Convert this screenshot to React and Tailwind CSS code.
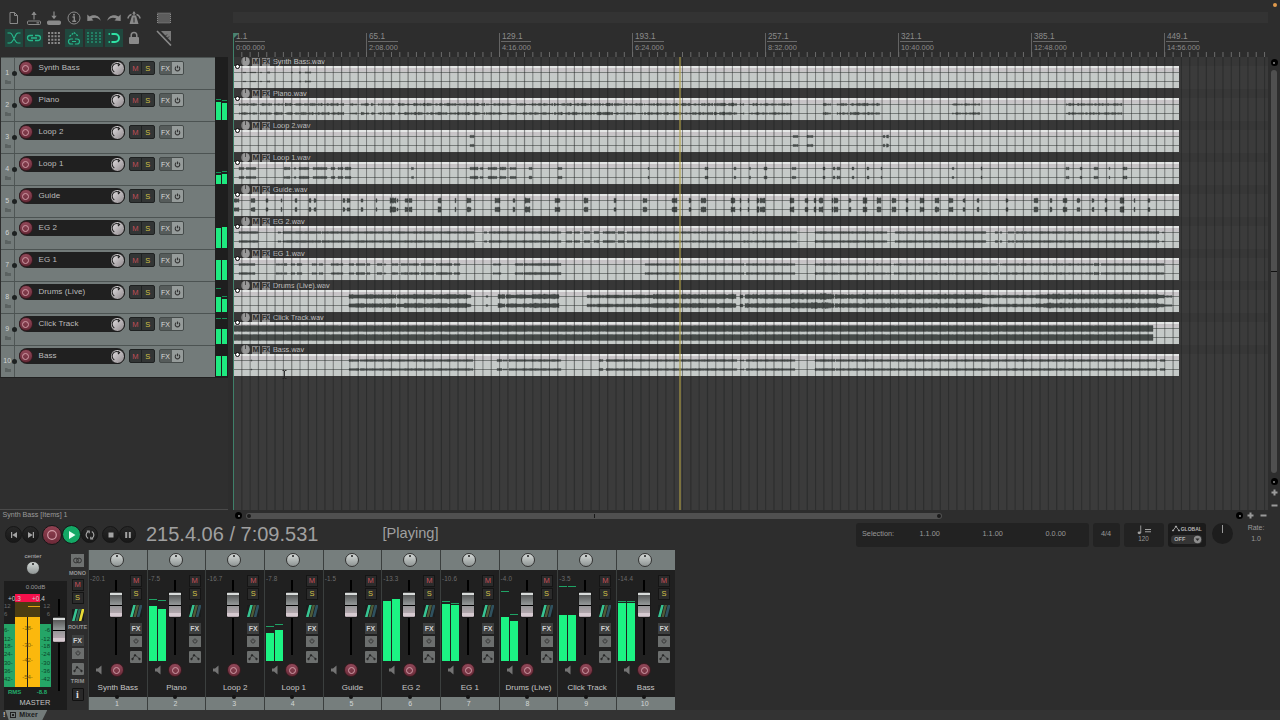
const tracks = [
  { name: "Synth Bass", db: "-20.1", tcp: [], mix: [], peaks: [] },
  { name: "Piano", db: "-7.5", tcp: [18, 17], tcpPeaks: [20, 19], mix: [55, 52], peaks: [61, 60] },
  { name: "Loop 2", db: "-16.7", tcp: [], mix: [], peaks: [] },
  { name: "Loop 1", db: "-7.8", tcp: [9, 10], tcpPeaks: [11, 12], mix: [28, 31], peaks: [34, 36] },
  { name: "Guide", db: "-1.5", tcp: [], mix: [], peaks: [] },
  { name: "EG 2", db: "-13.3", tcp: [20, 21], mix: [60, 62], peaks: [] },
  { name: "EG 1", db: "-10.6", tcp: [20, 20], mix: [57, 56], peaks: [59, 57.5] },
  { name: "Drums (Live)", db: "-4.0", tcp: [15, 13], tcpPeaks: [23, 15], mix: [44, 40], peaks: [69, 46.5] },
  { name: "Click Track", db: "-3.5", tcp: [15, 15], tcpPeaks: [25, 25], mix: [46, 46], peaks: [74, 74] },
  { name: "Bass", db: "-14.4", tcp: [20, 20], mix: [58, 58], peaks: [59.5, 59.5] },
];

// [start, end, amplitude] for every audible part, in timeline pixels
const waves = [
  [[10, 13, 0.6], [17, 23, 0.6], [27, 29, 0.6], [34, 37, 0.8], [58, 60, 0.6], [66, 68, 0.8], [72, 78, 0.8]],
  [[6, 24, 1.4], [27, 39, 1.6], [41, 50, 1.4], [52, 60, 1.5], [61, 111, 1.4], [117, 124, 1.3], [128, 136, 1.5], [138, 142, 1.5], [145, 162, 1.3], [165, 252, 1.5], [253, 320, 1.3], [321, 380, 1.6], [381, 410, 1.3], [411, 480, 1.5], [481, 504, 1.7], [507, 511, 1.4], [516, 559, 1.4], [590, 598, 1.4], [604, 615, 1.4], [617, 647, 1.5], [719, 747, 1.2], [833, 889, 1.4]],
  [[237, 241, 1.4], [560, 565, 1.2], [574, 580, 1.2], [650, 652, 1.4], [653.5, 656, 1.8]],
  [[6, 11, 1.3], [13, 23, 1.2], [51, 57, 1.2], [61, 63, 1], [66, 76, 1.3], [80, 94, 1.2], [98, 102, 1.2], [105, 110, 1.2], [112, 118, 1.4], [178.5, 181, 1.4], [237, 245, 1.4], [247, 250, 1.2], [255, 264, 1.3], [267, 273, 1.4], [277, 283, 1.2], [296, 299, 1.4], [325, 329, 1.3], [415, 416, 1.3], [472, 475, 1.6], [501, 503, 1.5], [516.5, 518, 1.5], [531, 534, 1.6], [559, 563, 1.4], [590, 592, 1.5], [600, 602, 1.4], [604, 607, 1.7], [619, 621, 1.5], [634, 636, 1.5], [648, 649.5, 1.5], [719, 721, 1.3], [748, 749.5, 1.8], [833, 836, 1.5], [847, 849, 1.4], [861, 865, 1.5], [876, 877, 1.4], [890, 894, 1.6]],
  [[0, 6, 2], [18, 22, 2.2], [33, 35, 2.2], [48, 49.5, 2.2], [62, 64, 2.4], [76, 78, 2.4], [81, 83, 2.2], [110, 112, 2.2], [114, 117, 2.2], [128, 130, 2], [143, 144.5, 2.2], [157, 163, 3], [164, 165, 2], [172, 175, 2.4], [176, 179, 2.8], [205, 208, 2.8], [222, 223.5, 2.6], [234, 238, 2.6], [262, 267, 2.6], [280, 282, 2.6], [292, 297, 3], [322, 327, 2.6], [351, 355, 2.8], [381, 383, 2.4], [410, 414, 2.8], [439, 444, 2.6], [456, 458, 2.6], [468, 473, 2.8], [498, 502, 2.8], [507, 508, 2.6], [515, 516.5, 2.6], [524, 526, 3], [527, 532, 3], [557, 561, 3], [572, 575, 2.8], [581, 583, 2.8], [586, 590, 2.8], [599, 600.5, 2.6], [601, 605, 2.8], [616, 618, 2.4], [630, 634, 3], [644, 648, 3], [659, 663, 2.8], [673, 675, 2.4], [687, 691, 2.8], [702, 706, 2.8], [716, 720, 2.8], [730, 732, 2.4], [744, 746, 2.4], [773, 775, 2.2], [801, 805, 2.8], [817, 819, 2.6], [830, 834, 2.8], [844, 847, 2.4], [859, 861, 2.4], [872, 874, 2.4], [887, 891, 3.2], [901, 902, 2.4], [915, 917, 2.2]],
  [[6, 25, 1.1], [45, 48, 0.8], [50, 88, 1.1], [89, 241, 1], [251, 254, 0.8], [256, 328, 1], [333, 339, 1], [341, 347, 1], [351, 357, 1.1], [361, 366, 1.2], [370, 382, 1.1], [385, 391, 1.2], [394, 564, 0.9], [582, 654, 1], [662, 753, 1], [762, 765, 1], [767, 769, 1], [775, 781, 0.9], [783, 790, 1], [791, 926, 1], [929, 931, 0.6]],
  [[6, 22, 1.1], [43, 50, 0.8], [51, 54, 1], [58, 62, 1], [64, 69, 1], [79, 84, 0.9], [86, 90, 0.9], [98, 110, 0.9], [116, 121, 1], [123, 132, 1.1], [134, 137, 1], [144, 149, 1.1], [151, 153, 0.8], [159, 165, 1.1], [168, 175, 1], [176, 186, 1], [188, 201, 1.1], [203, 219, 1.1], [221, 227, 1], [260, 268, 0.8], [282, 290, 1], [291, 328, 1.2], [412, 511, 1], [513, 562, 1], [582, 658, 0.9], [661, 765, 0.9], [767, 860, 0.9], [861, 866, 1.4], [868, 931, 1]],
  [[116, 163, 2.2], [164, 171, 2], [171, 234, 2.4], [234, 238, 1.6], [253, 255, 0.9], [265, 272, 2.2], [273, 300, 2], [300, 326, 2.4], [354, 400, 1.6], [400, 420, 1.9], [420, 470, 2.5], [470, 503, 2.4], [507, 510, 2], [512, 558, 2.4], [558, 598, 3.1], [598, 601, 2.2], [602, 630, 2.3], [630, 749, 2.6], [749, 803, 1.6], [803, 814, 2], [814, 900, 2.7], [900, 925, 2.5], [925, 931, 1.8], [931, 939, 0.9]],
  [[0, 920, 3.1]],
  [[18, 19, 0.7], [116, 126, 1.1], [127, 240, 1], [264, 269, 1.2], [270, 274, 0.8], [276, 328, 1], [366, 370, 1.2], [373, 504, 1], [507, 511, 0.8], [513, 562, 1], [582, 602, 1.1], [603, 924, 1], [927, 932, 1.1]],
];

const marks = [
  ["1.1", "0:00.000"],
  ["65.1", "2:08.000"],
  ["129.1", "4:16.000"],
  ["193.1", "6:24.000"],
  ["257.1", "8:32.000"],
  ["321.1", "10:40.000"],
  ["385.1", "12:48.000"],
  ["449.1", "14:56.000"],
];

const BAR = 8.315;
const gridLines = Array.from({ length: 125 }, (_, i) => i * BAR);

function jitter(n) {
  const v = Math.sin(n * 12.9898) * 43758.5453;
  return v - Math.floor(v);
}

// closed outline that mirrors the amplitude around the channel's middle
function wavePath(parts, mid, rough) {
  return parts
    .map(([a, b, amp]) => {
      const up = [];
      const down = [];
      for (let x = a; x <= b; x += 1) {
        const h = amp * (1 - rough * jitter(x + mid));
        up.push(`${x} ${(mid - h).toFixed(1)}`);
        down.unshift(`${x} ${(mid + h).toFixed(1)}`);
      }
      return `M${up.join("L")}L${down.join("L")}Z`;
    })
    .join("");
}

function PowerIcon({ size = 7 }) {
  return (
    <svg width={size} height={size} viewBox="0 0 8 8" fill="none" stroke="#333" strokeWidth="1.2">
      <path d="M2.6 1.9a2.6 2.6 0 1 0 2.8 0M4 .6v3" />
    </svg>
  );
}

function RecButton() {
  return (
    <span className="flex size-[14px] shrink-0 items-center justify-center rounded-full border border-[#39191f] bg-linear-to-b from-[#92495a] to-[#6a2b39]">
      <span className="size-[7px] rounded-full border border-[#cf9aa5]" />
    </span>
  );
}

function ToolIcon({ on, children }) {
  return (
    <span className="flex size-5 items-center justify-center">
      <span className={`flex size-[18px] items-center justify-center ${on ? "bg-[#20483e] text-[#27b68a]" : "text-[#8a8a8a]"}`}>
        <svg width="16" height="16" viewBox="0 0 16 16" fill="none" stroke="currentColor" strokeWidth="1">
          {children}
        </svg>
      </span>
    </span>
  );
}

function Toolbar() {
  return (
    <div className="flex h-[57px] flex-col pt-2 pl-1">
      <div className="flex h-5">
        <ToolIcon><path d="M4 2.5h4.500l3 3v8H4zM8.500 2.500v3h3" /></ToolIcon>
        <ToolIcon>
          <rect x="1.500" y="11" width="13" height="3.500" rx="1" />
          <path d="M8 9.500V2M10.500 12.800h2.500" strokeWidth="1.200" />
          <path d="M5.300 5 8 1.500 10.700 5z" fill="currentColor" stroke="none" />
        </ToolIcon>
        <ToolIcon>
          <rect x="1.500" y="11" width="13" height="3.500" rx="1" fill="currentColor" />
          <path d="M8 1.500V8" strokeWidth="1.200" />
          <path d="M5.300 5.800 8 9.300 10.700 5.800z" fill="currentColor" stroke="none" />
        </ToolIcon>
        <ToolIcon>
          <circle cx="8" cy="8" r="6" />
          <path d="M6.500 7h1.800v4M6.300 11.300h3.800" strokeWidth="1.400" />
          <circle cx="8" cy="4.700" r="1" fill="currentColor" stroke="none" />
        </ToolIcon>
        <ToolIcon>
          <path d="M1.300 4.500 1.300 11 7.500 10.500 5.600 8.600C9 6.900 12 7.500 14.800 10.800 13.800 5.500 8 3.500 3.500 6.600Z" fill="currentColor" stroke="none" />
        </ToolIcon>
        <ToolIcon>
          <path d="M14.700 4.500 14.700 11 8.500 10.500 10.400 8.600C7 6.900 4 7.500 1.200 10.800 2.200 5.500 8 3.500 12.500 6.600Z" fill="currentColor" stroke="none" />
        </ToolIcon>
        <ToolIcon>
          <path d="M6 5.500h4L12.500 14h-9z" fill="currentColor" stroke="none" />
          <path d="M8 7.500v5" stroke="#2d2d2d" />
          <path d="M8 5.500V2M5.500 4.500Q2.800 5 1.800 8.500M10.500 4.500Q13.200 5 14.200 8.500" strokeWidth="1.400" />
          <path d="M6.200 3.800 8 1l1.800 2.800z" fill="currentColor" stroke="none" />
        </ToolIcon>
        <span className="w-2.5" />
        <ToolIcon>
          <rect x="1.500" y="3" width="13" height="10" fill="#5c5c5c" strokeDasharray="1 1" />
        </ToolIcon>
      </div>
      <div className="flex h-5">
        <ToolIcon on><path d="M1.500 3H4q1.500 0 3.200 4l1.600 3q1.500 3 3.200 3h2.500M1.500 13H4q1.500 0 3.200-3L8.800 7q1.500-4 3.200-4h2.500" strokeWidth="1.200" /></ToolIcon>
        <ToolIcon on>
          <path d="M7 5.500H4a2.500 2.500 0 0 0 0 5h3M9 5.500h3a2.500 2.500 0 0 1 0 5H9M5 8h6" strokeWidth="1.300" />
        </ToolIcon>
        <ToolIcon>
          <path d="M2 3h12M2 6.300h12M2 9.700h12M2 13h12" strokeWidth="2" strokeDasharray="2 1.300" />
        </ToolIcon>
        <ToolIcon on>
          <path d="M3.500 6.500 8 2.500 12.500 6.500" strokeWidth="1.300" strokeDasharray="2 1" />
          <path d="M7 9H5a2 2 0 0 0 0 5h2M9 9h2a2 2 0 0 1 0 5H9M6 11.500h4" strokeWidth="1.200" />
        </ToolIcon>
        <ToolIcon on>
          <path d="M2 2v12M6 2v12M10 2v12M14 2v12" strokeDasharray="2 1" />
        </ToolIcon>
        <ToolIcon on>
          <path d="M5.500 4H9a4 4 0 0 1 0 8H5.500" strokeWidth="2" className="text-[#2fe3a5]" stroke="currentColor" />
          <path d="M2.500 4h1.500M2.500 12h1.500" strokeWidth="2" />
        </ToolIcon>
        <ToolIcon>
          <rect x="3" y="7" width="10" height="7" rx="1" fill="currentColor" stroke="none" />
          <path d="M5.200 8V5.200a2.800 2.800 0 0 1 5.600 0V8" strokeWidth="1.500" />
        </ToolIcon>
        <span className="w-2.5" />
        <ToolIcon>
          <path d="M5 1h10v10.500z" fill="#7a7a7a" stroke="none" />
          <path d="M1 1 15 15.500" strokeWidth="1.600" />
          <path d="M9.500 6l1.500-1.500M11.500 8l1.500-1.500" stroke="#2d2d2d" />
        </ToolIcon>
      </div>
    </div>
  );
}

function TcpMeter({ levels, peaks = [] }) {
  return (
    <div className="flex h-8 w-[13px] items-end gap-px bg-[#1e1e1e] pb-px pl-px">
      {levels.map((v, i) => (
        <span key={i} className="relative w-[5px] bg-[#1eea80]" style={{ height: v }}>
          {peaks[i] && <span className="absolute left-0 h-px w-full bg-[#179158]" style={{ bottom: peaks[i] }} />}
        </span>
      ))}
    </div>
  );
}

function TrackRow({ track, index }) {
  return (
    <div className="flex h-8 pl-px">
      <div className="flex w-[214px] border-t border-[#4c5352] bg-[#737b7a]">
        <div className="relative flex w-[13.500px] shrink-0 flex-col items-center border-r border-[#4f5655] pt-[9px] text-[7px] leading-[12px] text-[#d0d4d3]">
          <span>{index + 1}</span>
          <svg className="mt-[1px] ml-[2px]" width="6" height="4" fill="#5b6261"><path d="M0 0h2.500v1H6v3H0z" /></svg>
          <span className="absolute top-[13px] -right-[3px] size-[5px] rounded-full bg-[#1d2121]" />
        </div>
        <div className="mt-[2px] ml-[4px] flex h-4 w-[106px] items-center rounded-full bg-[#202020]">
          <RecButton />
          <span className="ml-[6px] flex-1 text-[8px] leading-none tracking-[0.01em] text-[#bcbcbc]">{track.name}</span>
          <span className="flex size-[15px] items-center justify-center rounded-full border border-[#1a1a1a] bg-linear-to-br from-[#e8e5e7] to-[#8f898c]">
            <svg width="13" height="13" viewBox="0 0 13 13" fill="none" stroke="#222" strokeWidth="1.100">
              <path d="M3.300 10A4.500 4.500 0 0 1 8 2.300M6.800 1.200l1.800 1.300-1.600 1.500" />
            </svg>
          </span>
        </div>
        <div className="mt-[3px] ml-[4px] flex h-[14px] w-[26px] rounded-[2px] border border-[#1e2121] bg-[#323535] text-[7.500px] leading-[13px]">
          <span className="flex-1 border-r border-[#1e2121] text-center text-[#c04e58]">M</span>
          <span className="flex-1 text-center text-[#d0c045]">S</span>
        </div>
        <div className="mt-[3px] ml-[4px] flex h-[14px] w-[25px] overflow-hidden rounded-[2px] border border-[#454b4a] bg-[#565c5b] text-[7px] leading-[13px] text-[#d8dbda]">
          <span className="flex-1 text-center">FX</span>
          <span className="flex w-[11px] items-center justify-center bg-[#959b9a]"><PowerIcon /></span>
        </div>
      </div>
      <TcpMeter levels={track.tcp} peaks={track.tcpPeaks} />
    </div>
  );
}

function TrackPanel() {
  return (
    <div className="flex w-[233px] shrink-0 flex-col">
      <Toolbar />
      {tracks.map((t, i) => (
        <TrackRow key={t.name} track={t} index={i} />
      ))}
      <div className="mr-[5px] flex-1 border-t border-b border-t-[#202020] border-b-[#4a4a4a] bg-[#2f2f2f]" />
    </div>
  );
}

function Ruler() {
  return (
    <div className="relative flex h-[24px] overflow-hidden">
      {marks.map(([bar, time], i) => (
        <div key={bar} className="w-[133px] shrink-0 border-l border-[#636363] pl-[1px] text-[#8b8b8b]">
          <div className={`border-b border-[#686868] pl-px text-[8.200px] leading-[8px] ${i > 4 ? "w-[33px]" : "w-[30px]"}`}>{bar}</div>
          <div className="pl-[1px] text-[7.400px] leading-[11px]">{time}</div>
        </div>
      ))}
      <svg className="absolute bottom-0 left-0" width="1035" height="5">
        {gridLines.map((x) => (
          <path key={x} d={`M${x + 0.5} 0v5`} stroke="#6b6b6b" strokeWidth="1" />
        ))}
      </svg>
      <svg className="absolute top-0 left-0" width="6" height="6"><path d="M0 0h6L0 6z" fill="#4b8271" /></svg>
    </div>
  );
}

function MediaItem({ track, index }) {
  const rough = index === 8 ? 0.1 : index === 1 ? 0.8 : 0.35;
  return (
    <div className="relative h-8">
      <div className="flex h-[9px] items-center bg-[#373737] pl-2 text-[7.300px] leading-[9px] text-[#c4c4c4]">
        <span className="flex size-[9px] justify-center rounded-full bg-[#999]"><span className="h-1 w-px bg-[#4a4a4a]" /></span>
        <span className="ml-[1.500px] h-[8px] w-[8.500px] bg-[#8b8b8b] text-center text-[8px] leading-[8.500px] font-bold text-[#2c2c2c]">M</span>
        <span className="ml-[1.500px] h-[8px] w-[8.500px] bg-[#8b8b8b] text-center text-[6.500px] leading-[8.500px] font-bold tracking-tighter text-[#2c2c2c]">FX</span>
        <span className="ml-[3px]">{track.name}.wav</span>
      </div>
      <div className="h-[22px] w-[946px] border-t-2 border-[#e4e6e5] bg-linear-to-b from-[#c8c4c7] from-10% to-[#c5cac8] to-35%">
        <svg className="-mt-[2px] block" width="946" height="22">
          <path d="M0 6.500h946M0 15.500h946" stroke="#777c7a" strokeWidth="1" />
          <path d={wavePath(waves[index], 6.5, rough) + wavePath(waves[index], 15.5, rough)} fill="#454a48" stroke="#454a48" strokeWidth={index < 2 ? 0.2 : 0.4} />
        </svg>
      </div>
      <span className="absolute top-[7px] left-[1.500px] size-[5px] rounded-full border border-black bg-white" />
    </div>
  );
}

function Timeline() {
  return (
    <div className="flex min-w-0 flex-1 flex-col pt-3">
      <div className="h-[11px] w-[1035px] bg-[#333333]" />
      <div className="relative mt-[10px] flex flex-1 flex-col">
        <Ruler />
        <div className="relative w-[1035px] flex-1 overflow-hidden bg-[#3b3b3b]">
          {tracks.map((t, i) => (
            <MediaItem key={t.name} track={t} index={i} />
          ))}
          <svg className="absolute top-0 left-0" width="1035" height="453">
            {gridLines.map((x, i) => (
              <path key={x} d={`M${x + 0.5} 0v453`} stroke="#1c1f1e" strokeWidth={i % 2 ? 1.2 : 1} strokeOpacity="0.46" />
            ))}
          </svg>
          <svg className="absolute top-[313px] left-[49px]" width="5" height="9" fill="none" stroke="#222">
            <path d="M.5.500h1.500l.5 1 .5-1H4.500M2.500 1v6.500M.5 8.500h1.500l.5-1 .5 1H4.500" strokeWidth="0.900" />
          </svg>
        </div>
        <span className="absolute top-0 bottom-0 left-0 w-px bg-[#3f8069]" />
        <span className="absolute top-6 bottom-0 left-[446px] w-[2px] bg-[#b5a244]/55" />
      </div>
    </div>
  );
}

function ScrollDot() {
  return (
    <span className="flex size-[7px] shrink-0 items-center justify-center rounded-full bg-black">
      <span className="size-[2px] rounded-full bg-[#8a8a8a]" />
    </span>
  );
}

function ZoomMark({ plus }) {
  return (
    <svg className="block" width="7" height="7" stroke="#9a9a9a" strokeWidth="2">
      <path d={plus ? "M0.500 3.500h6M3.500.500v6" : "M0.500 3.500h6"} />
    </svg>
  );
}

function VerticalScroll() {
  return (
    <div className="flex w-3 shrink-0 flex-col items-center">
      <span className="mt-[3px] mr-[-1px] size-[4px] rounded-full bg-[#e09a4c]" />
      <span className="mt-[52px]"><ScrollDot /></span>
      <div className="mt-[4px] flex h-[403px] w-[6px] flex-col justify-center rounded-full bg-[#505050]">
        <span className="h-px w-full bg-[#111]" />
      </div>
      <span className="mt-[5px]"><ScrollDot /></span>
      <span className="mt-[4px]"><ZoomMark plus /></span>
      <span className="mt-[6px]"><ZoomMark /></span>
    </div>
  );
}

function StatusRow() {
  return (
    <div className="flex h-[11px] items-center">
      <div className="w-[235px] pl-[2.500px] text-[7.100px] leading-none text-[#9a9a9a]">Synth Bass [Items] 1</div>
      <ScrollDot />
      <div className="ml-[4px] flex h-[6px] w-[696px] items-center justify-between rounded-full bg-[#505050] px-px">
        <span className="size-[4px] rounded-full bg-[#1b1b1b]" />
        <span className="h-1 w-px bg-[#181818]" />
        <span className="size-[4px] rounded-full bg-[#1b1b1b]" />
      </div>
      <div className="ml-auto flex items-center gap-[6px] pr-[13px]">
        <ScrollDot />
        <span className="ml-[-2px]"><ZoomMark plus /></span>
        <ZoomMark />
      </div>
    </div>
  );
}

function TransportButton({ children, tone }) {
  const tones = {
    rec: "size-[20px] bg-linear-to-b from-[#914252] to-[#6d2a39]",
    play: "size-[19px] bg-[#13a865]",
    dark: "size-[17px] bg-linear-to-b from-[#272727] to-[#181818]",
  };
  return (
    <span className={`flex shrink-0 items-center justify-center rounded-full border border-[#161616] ${tones[tone ?? "dark"]}`}>
      <svg width="12" height="12" viewBox="0 0 12 12" fill="#a3a3a3">{children}</svg>
    </span>
  );
}

function Transport() {
  return (
    <div className="flex h-[29px] items-center pb-[2px]">
      <div className="flex w-[146px] shrink-0 items-center pl-[5px]">
        <TransportButton><path d="M3 3h1.200v6H3zM9 3v6L4.300 6z" /></TransportButton>
        <TransportButton><path d="M7.800 3H9v6H7.800zM3 3v6l4.700-3z" /></TransportButton>
        <span className="ml-[3px]"><TransportButton tone="rec"><circle cx="6" cy="6" r="4.300" fill="none" stroke="#d29ba6" strokeWidth="1.200" /></TransportButton></span>
        <TransportButton tone="play"><path d="M3 2v8l6.500-4z" fill="#e6fff2" /></TransportButton>
        <TransportButton>
          <path d="M4.200 9.500A4 4 0 0 1 4.200 2.500M2.800 2h2.400v2.200M7.800 2.500A4 4 0 0 1 7.800 9.500M9.200 10H6.800V7.800" fill="none" stroke="#a3a3a3" strokeWidth="1.200" />
        </TransportButton>
        <span className="ml-[4px] flex">
          <TransportButton><path d="M3.500 3.500h5v5h-5z" /></TransportButton>
          <TransportButton><path d="M3.200 3h2v6h-2zM6.800 3h2v6h-2z" /></TransportButton>
        </span>
      </div>
      <div className="-mt-[2px] w-[236.500px] text-[20px] leading-none text-[#a0a0a0]">215.4.06 / 7:09.531</div>
      <div className="-mt-[2px] text-[14.600px] leading-none text-[#a0a0a0]">[Playing]</div>
      <div className="ml-auto flex h-6 gap-1 text-[7.300px] text-[#999]">
        <div className="flex w-[233px] items-center rounded-[3px] bg-[#222] pl-[6.500px]">
          <span className="w-[57.500px]">Selection:</span>
          <span className="w-[63px]">1.1.00</span>
          <span className="w-[63px]">1.1.00</span>
          <span>0.0.00</span>
        </div>
        <div className="flex w-[27px] items-center justify-center rounded-[3px] bg-[#222]">4/4</div>
        <div className="flex w-10 flex-col items-center rounded-[3px] bg-[#222] pt-[2px] text-[6.300px] leading-[9px]">
          <svg className="block" width="14" height="10" fill="#a0a0a0">
            <ellipse cx="2.300" cy="7.800" rx="1.700" ry="1.400" />
            <path d="M3.300 0.500h.9v7.500h-.9zM8 4h6v1H8zM8 6.200h6v1H8z" />
          </svg>
          <span className="-mt-px">120</span>
        </div>
        <div className="flex w-[38.500px] flex-col items-center rounded-[3px] bg-[#1b1b1b] pt-[2px] text-[5.500px] leading-[8px] font-bold text-[#b5b5b5]">
          <span className="flex items-center">
            <svg width="8" height="7" fill="#b5b5b5" stroke="#b5b5b5" strokeWidth="0.800">
              <path d="M1 5.500 4 1.500 7 5.500" fill="none" />
              <circle cx="1" cy="5.500" r="0.600" /><circle cx="4" cy="1.500" r="0.600" /><circle cx="7" cy="5.500" r="0.600" />
            </svg>
            <span className="ml-px text-[5px]">GLOBAL</span>
          </span>
          <span className="mt-[2px] flex h-[9px] w-[31px] items-center justify-between rounded-[4px] bg-[#353535] pl-[3px]">
            OFF
            <svg width="9" height="9"><circle cx="4.500" cy="4.500" r="3.700" fill="#8d8d8d" /><path d="M2.500 3.500h4l-2 2.500z" fill="#2a2a2a" /></svg>
          </span>
        </div>
        <div className="ml-[2px] flex size-[21px] justify-center rounded-full bg-[#1d1d1d]">
          <span className="mt-[2px] h-[8px] w-px bg-[#9a9a9a]" />
        </div>
        <div className="-mt-px w-[34px] pl-[4px] text-center text-[7px] leading-[11px]">
          <div>Rate:</div>
          <div>1.0</div>
        </div>
        <span className="w-[5px]" />
      </div>
    </div>
  );
}

function FaderCap() {
  return (
    <span className="relative flex h-[27px] w-[14px] flex-col justify-center rounded-[2px] border border-[#1a1a1a] bg-linear-to-b from-[#474747] from-0% via-[#8b9090] via-45% to-[#b9abb2] to-90%">
      <span className="absolute top-px left-0 h-[2px] w-full bg-[#d9dcdb]" />
      <span className="mt-[2px] h-px w-full bg-black" />
      <span className="absolute bottom-px left-0 h-[3px] w-full bg-[#d6cad0]" />
    </span>
  );
}

function RouteIcon({ bright }) {
  return (
    <svg width="12" height="12" viewBox="0 0 12 12" className="block bg-[#1a1c1c]">
      <path d="M3.200 0h2.600L2.600 12H0z" fill="#37c492" />
      <path d="M6.500 0h2.500L5.900 12H3.500z" fill={bright ? "#2d6b58" : "#4f5c38"} />
      <path d="M9.700 0H12v2L9.400 12H6.800z" fill={bright ? "#e8db36" : "#2f5260"} />
    </svg>
  );
}

function EnvIcon() {
  return (
    <span className="flex size-3 items-center justify-center rounded-[1px] bg-[#6c6f6e]">
      <svg width="10" height="8" fill="#222" stroke="#222" strokeWidth="0.700">
        <path d="M1.500 6 4 2.300 6.500 3.800 8.500 6" fill="none" />
        <circle cx="1.500" cy="6" r="0.800" /><circle cx="4" cy="2.300" r="0.800" /><circle cx="8.500" cy="6" r="0.800" />
      </svg>
    </span>
  );
}

function Knob() {
  return (
    <span className="flex size-[14px] justify-center rounded-full border border-[#333] bg-linear-to-b from-[#d5dad8] to-[#8f9594]">
      <span className="mt-px h-[2px] w-[2px] rounded-full bg-[#1c1c1c]" />
    </span>
  );
}

function MuteSolo() {
  return (
    <>
      <span className="h-3 w-3 border border-[#151515] bg-[#2b2b2b] text-center text-[7.500px] leading-[10px] text-[#c9505a]">M</span>
      <span className="mt-px h-3 w-3 border border-[#151515] bg-[#2b2b2b] text-center text-[7.500px] leading-[10px] text-[#d3c34a]">S</span>
    </>
  );
}

function FxPower() {
  return (
    <>
      <span className="h-[11px] w-3 bg-[#3d3f3f] text-center text-[7px] leading-[11px] font-bold text-[#cecece]">FX</span>
      <span className="mt-[1.500px] flex h-[11px] w-3 items-center justify-center bg-[#6c6f6e]"><PowerIcon size={6} /></span>
    </>
  );
}

const sideLabels = [["12", 598], ["6", 606], ["6", 622], ["12", 631], ["18", 638], ["24", 646], ["30", 655], ["36", 663], ["42", 671]];
const midLabels = [["-18-", 620], ["-30-", 637], ["-42-", 652], ["-54-", 669]];

// level display is a drawing: scale labels sit on top of the bars
function MasterMeter() {
  return (
    <svg className="block" width="47" height="94" viewBox="0 593 47 94" fontSize="6" fontFamily="Liberation Sans, sans-serif">
      <rect x="11" y="594" width="25" height="8" fill="#f5104b" />
      <rect x="11" y="602" width="25" height="15" fill="#4c3c12" />
      <path d="M24 606.500h12" stroke="#e0a012" />
      <rect x="0" y="624" width="11" height="63" fill="#25a567" />
      <rect x="36" y="624" width="11" height="63" fill="#25a567" />
      <rect x="11" y="617" width="12" height="70" fill="#fbb80d" />
      <rect x="24" y="617" width="12" height="70" fill="#fbb80d" />
      <g fill="#c9c9c9" fontSize="6.500">
        <text x="4" y="601">+0.3</text>
        <text x="28" y="601">+0.4</text>
      </g>
      {sideLabels.map(([t, y], i) => (
        <g key={i} fill={i < 2 ? "#6b6b6b" : "#0c4329"}>
          <text x="0" y={y + 10}>{t}{i > 1 ? "-" : ""}</text>
          <text x="46" y={y + 10} textAnchor="end">{i > 1 ? "-" : ""}{t}</text>
        </g>
      ))}
      {midLabels.map(([t, y]) => (
        <text key={t} x="23.500" y={y + 10} textAnchor="middle" fill="#7f5d06">{t}</text>
      ))}
    </svg>
  );
}

function Master() {
  return (
    <div className="flex w-[88px] shrink-0">
      <div className="flex w-[67px] flex-col pl-1">
        <div className="flex h-[31px] flex-col items-center pt-px pr-[5px]">
          <span className="text-[6.200px] leading-[10px] text-[#b8b8b8]">center</span>
          <Knob />
        </div>
        <div className="flex flex-1 bg-[#1d1d1d]">
          <div className="flex w-[47px] flex-col">
            <div className="h-3 pl-[16px] text-center text-[6.200px] leading-[12px] text-[#999]">0.00dB</div>
            <MasterMeter />
            <div className="flex justify-between px-1 text-[6px] leading-[11px] font-bold text-[#22ad6b]"><span>RMS</span><span>-8.8</span></div>
            <div className="w-[62px] text-center text-[7.400px] leading-[10px] text-[#c4c4c4]">MASTER</div>
          </div>
          <div className="relative mt-[18px] ml-[7px] h-[92px] w-[2px] bg-black">
            <span className="absolute top-[17px] -left-[6px]"><FaderCap /></span>
          </div>
        </div>
      </div>
      <div className="flex w-[21px] flex-col items-center pt-1 text-[5.500px] leading-[6px] font-bold text-[#969696]">
        <span className="flex size-[13px] items-center justify-center bg-[#6f7271]">
          <svg width="9" height="7" fill="none" stroke="#333"><circle cx="3" cy="3.500" r="2.400" /><circle cx="6" cy="3.500" r="2.400" /></svg>
        </span>
        <span className="mt-[3px] mb-[3px]">MONO</span>
        <span className="flex flex-col font-normal"><MuteSolo /></span>
        <span className="mt-[5px]"><RouteIcon bright /></span>
        <span className="mt-[3px] mb-[5px]">ROUTE</span>
        <span className="flex flex-col"><FxPower /></span>
        <span className="mt-[4px]"><EnvIcon /></span>
        <span className="mt-[3px] mb-[4px]">TRIM</span>
        <span className="h-[13px] w-3 rounded-[1px] border border-[#111] bg-[#292929] text-center font-['Liberation_Serif',serif] text-[10px] leading-[11px] text-[#ddd]">i</span>
      </div>
    </div>
  );
}

function Channel({ track, index }) {
  return (
    <div className="flex min-w-0 flex-1 flex-col border-l border-[#3b3f3e] bg-[#202020]">
      <div className="flex h-5 bg-[#767e7d] pt-[2.500px] pl-[21px]"><Knob /></div>
      <div className="flex h-[91px]">
        <div className="flex w-[20px] flex-col justify-between pl-[1px]">
          <span className="mt-[5px] text-[6.300px] leading-[8px] tracking-wide whitespace-nowrap text-[#6c6c6c]">{track.db}</span>
          <div className="flex items-end gap-px">
            {track.mix.map((v, i) => (
              <span key={i} className="relative w-[8px] shrink-0 bg-[#1cf383]" style={{ height: v }}>
                {track.peaks[i] && <span className="absolute left-0 h-px w-full bg-[#1fa365]" style={{ bottom: track.peaks[i] }} />}
              </span>
            ))}
          </div>
        </div>
        <div className="relative mt-[10px] ml-[6px] h-[75px] w-[2px] bg-black">
          <span className="absolute top-[11px] -left-[6px]"><FaderCap /></span>
        </div>
        <div className="mt-[5px] ml-[13px] flex w-3 flex-col">
          <MuteSolo />
          <span className="mt-[5px]"><RouteIcon /></span>
          <span className="mt-[6px] flex flex-col"><FxPower /></span>
          <span className="mt-[4.500px]"><EnvIcon /></span>
        </div>
      </div>
      <div className="flex h-[18px] items-center pl-[6px]">
        <svg width="8" height="10" fill="#747474"><path d="M1 3.500h2L6.500.500v9L3 6.500H1z" /></svg>
        <span className="ml-[6.500px]"><RecButton /></span>
      </div>
      <div className="h-[18px] text-center text-[8px] leading-[18px] text-[#c6c6c6]">{track.name}</div>
      <div className="relative h-[13px] bg-[#767e7d] pr-[2px] text-center text-[7px] leading-[13px] text-[#d4d8d7]">
        <span className="absolute -top-[2px] left-[25.500px] size-1 rounded-full bg-[#141414]" />
        {index + 1}
      </div>
    </div>
  );
}

function Mixer() {
  return (
    <div className="flex h-[160px]">
      <Master />
      <div className="flex w-[586.500px]">
        {tracks.map((t, i) => (
          <Channel key={t.name} track={t} index={i} />
        ))}
      </div>
    </div>
  );
}

export default function App() {
  return (
    <div className="flex h-[720px] w-[1280px] flex-col overflow-hidden bg-[#2d2d2d] font-['Liberation_Sans',Arial,sans-serif]">
      <div className="flex h-[510px]">
        <TrackPanel />
        <Timeline />
        <VerticalScroll />
      </div>
      <StatusRow />
      <Transport />
      <Mixer />
      <div className="flex h-[10px] items-center bg-[#333] pl-[3px] text-[7px] leading-[10px] font-bold">
        <span className="text-[#ccc]">!</span>
        <span className="flex h-[10px] w-[42px] items-center gap-[3px] bg-[#737b7a] pl-[5px] text-[#1c1c1c] [clip-path:polygon(0_0,100%_0,88%_100%,8%_100%)]">
          <svg width="6" height="6" fill="none" stroke="#222"><rect x="0.500" y="0.500" width="5" height="5" /><rect x="2.500" y="2.500" width="1" height="1" /></svg>
          Mixer
        </span>
      </div>
    </div>
  );
}
